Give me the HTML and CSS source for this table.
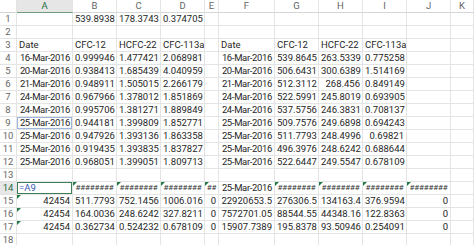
FILE: index.html
```html
<!DOCTYPE html>
<html>
<head>
<meta charset="utf-8">
<link rel="stylesheet" href="styles.css">
</head>
<body>
<div class="sheet">
  <div class="corner"></div><div class="h hs">A</div><div class="h">B</div><div class="h">C</div><div class="h">D</div><div class="h">E</div><div class="h">F</div><div class="h">G</div><div class="h">H</div><div class="h">I</div><div class="h">J</div><div class="h">K</div>

  <div class="rh">1</div><div></div><div class="r">539.8938</div><div class="r">178.3743</div><div class="r">0.374705</div><div></div><div></div><div></div><div></div><div></div><div></div><div></div>

  <div class="rh">2</div><div></div><div></div><div></div><div></div><div></div><div></div><div></div><div></div><div></div><div></div><div></div>

  <div class="rh">3</div><div>Date</div><div>CFC-12</div><div>HCFC-22</div><div>CFC-113a</div><div></div><div>Date</div><div>CFC-12</div><div>HCFC-22</div><div>CFC-113a</div><div></div><div></div>

  <div class="rh">4</div><div class="r d">16-Mar-2016</div><div class="r">0.999946</div><div class="r">1.477421</div><div class="r">2.068981</div><div></div><div class="r d">16-Mar-2016</div><div class="r">539.8645</div><div class="r">263.5339</div><div class="r">0.775258</div><div></div><div></div>

  <div class="rh">5</div><div class="r d">20-Mar-2016</div><div class="r">0.938413</div><div class="r">1.685439</div><div class="r">4.040959</div><div></div><div class="r d">20-Mar-2016</div><div class="r">506.6431</div><div class="r">300.6389</div><div class="r">1.514169</div><div></div><div></div>

  <div class="rh">6</div><div class="r d">21-Mar-2016</div><div class="r">0.948911</div><div class="r">1.505015</div><div class="r">2.266179</div><div></div><div class="r d">21-Mar-2016</div><div class="r">512.3112</div><div class="r">268.456</div><div class="r">0.849149</div><div></div><div></div>

  <div class="rh">7</div><div class="r d">24-Mar-2016</div><div class="r">0.967966</div><div class="r">1.378012</div><div class="r">1.851869</div><div></div><div class="r d">24-Mar-2016</div><div class="r">522.5991</div><div class="r">245.8019</div><div class="r">0.693905</div><div></div><div></div>

  <div class="rh">8</div><div class="r d">24-Mar-2016</div><div class="r">0.995706</div><div class="r">1.381271</div><div class="r">1.889849</div><div></div><div class="r d">24-Mar-2016</div><div class="r">537.5756</div><div class="r">246.3831</div><div class="r">0.708137</div><div></div><div></div>

  <div class="rh">9</div><div class="r d ref">25-Mar-2016</div><div class="r">0.944181</div><div class="r">1.399809</div><div class="r">1.852771</div><div></div><div class="r d">25-Mar-2016</div><div class="r">509.7576</div><div class="r">249.6898</div><div class="r">0.694243</div><div></div><div></div>

  <div class="rh">10</div><div class="r d">25-Mar-2016</div><div class="r">0.947926</div><div class="r">1.393136</div><div class="r">1.863358</div><div></div><div class="r d">25-Mar-2016</div><div class="r">511.7793</div><div class="r">248.4996</div><div class="r">0.69821</div><div></div><div></div>

  <div class="rh">11</div><div class="r d">25-Mar-2016</div><div class="r">0.919435</div><div class="r">1.393835</div><div class="r">1.837827</div><div></div><div class="r d">25-Mar-2016</div><div class="r">496.3976</div><div class="r">248.6242</div><div class="r">0.688644</div><div></div><div></div>

  <div class="rh">12</div><div class="r d">25-Mar-2016</div><div class="r">0.968051</div><div class="r">1.399051</div><div class="r">1.809713</div><div></div><div class="r d">25-Mar-2016</div><div class="r">522.6447</div><div class="r">249.5547</div><div class="r">0.678109</div><div></div><div></div>

  <div class="rh">13</div><div></div><div></div><div></div><div></div><div></div><div></div><div></div><div></div><div></div><div></div><div></div>

  <div class="rh rhs">14</div><div class="sel">=A9</div><div class="t hash">########</div><div class="t hash">########</div><div class="t hash">########</div><div class="t hash">##</div><div class="r d">25-Mar-2016</div><div class="t hash">########</div><div class="t hash">########</div><div class="t hash">########</div><div class="t hash">########</div><div></div>

  <div class="rh">15</div><div class="r t">42454</div><div class="r">511.7793</div><div class="r">752.1456</div><div class="r">1006.016</div><div class="r">0</div><div class="r">22920653.5</div><div class="r">276306.5</div><div class="r">134163.4</div><div class="r">376.9594</div><div class="r">0</div><div></div>

  <div class="rh">16</div><div class="r t">42454</div><div class="r">164.0036</div><div class="r">248.6242</div><div class="r">327.8211</div><div class="r">0</div><div class="r">7572701.05</div><div class="r">88544.55</div><div class="r">44348.16</div><div class="r">122.8363</div><div class="r">0</div><div></div>

  <div class="rh">17</div><div class="r t">42454</div><div class="r">0.362734</div><div class="r">0.524232</div><div class="r">0.678109</div><div class="r">0</div><div class="r">15907.7389</div><div class="r">195.8378</div><div class="r">93.50946</div><div class="r">0.254091</div><div class="r">0</div><div></div>

  <div class="rh">18</div><div></div><div></div><div></div><div></div><div></div><div></div><div></div><div></div><div></div><div></div><div></div>
</div>
</body>
</html>
```

FILE: styles.css
```css
html, body {
  margin: 0;
  padding: 0;
  background: #ffffff;
}

body {
  width: 474px;
  height: 245px;
  overflow: hidden;
  font-family: Roboto, "Liberation Sans", sans-serif;
  font-size: 9.5px;
  color: #262626;
}

.sheet {
  display: grid;
  grid-template-columns: 17px 56px 44px 44px 44px 14px 56px 44px 44px 44px 44px 1fr;
  grid-auto-rows: 13px;
}

.sheet > div {
  box-sizing: border-box;
  border-right: 1px solid #e4e4e4;
  border-bottom: 1px solid #e4e4e4;
  line-height: 12px;
  padding: 0 2px;
  white-space: nowrap;
  overflow: hidden;
  position: relative;
}

.sheet > .corner {
  border-bottom-color: #d6d6d6;
}

.sheet > .h {
  text-align: center;
  color: #666666;
  border-bottom-color: #d6d6d6;
  padding: 0;
}

.sheet > .hs {
  background: #e6e6e6;
  color: #1e6b3f;
  border-bottom: 1px solid #6f9b7e;
}

.sheet > .rh {
  text-align: center;
  color: #666666;
  padding: 0;
}

.sheet > .rhs {
  background: #e8e8e8;
  color: #1e6b3f;
}

.r {
  text-align: right;
}

.sheet > .d {
  letter-spacing: -0.35px;
  padding-right: 2px;
}

.sheet > .hash {
  font-size: 8px;
  text-align: center;
  padding: 0;
  letter-spacing: -0.2px;
  color: #333333;
}

.sheet > .sel {
  box-shadow: inset 0 0 0 1px #3f7d56;
  color: #3456b0;
  overflow: visible;
}

.sheet > .ref {
  box-shadow: inset 0 0 0 1px #9db5dc;
}

.t::before {
  content: "";
  position: absolute;
  left: 0;
  top: 0;
  border-top: 4px solid #237a47;
  border-right: 4px solid transparent;
}
```
